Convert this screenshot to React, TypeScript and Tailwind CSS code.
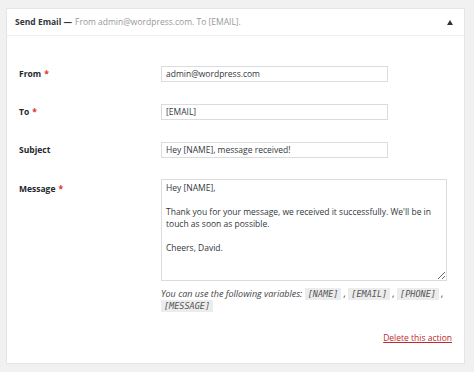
import React from "react";

const font = { fontFamily: '"Open Sans", "Noto Sans", sans-serif' };

function Label({ text, required }: { text: string; required?: boolean }) {
  return (
    <div className="w-[154px] shrink-0 pl-[12px] font-bold text-[#23282d] text-[8.5px]">
      {text}
      {required && <span className="text-[#dc3232] ml-[3px]">*</span>}
    </div>
  );
}

function Input({ value }: { value: string }) {
  return (
    <div className="w-[227px] h-[16px] border border-[#dcdcdc] flex items-center px-[4px] text-[8.5px] text-[#32373c] leading-none">
      {value}
    </div>
  );
}

function Chip({ children }: { children: React.ReactNode }) {
  return (
    <span
      className="bg-[#ececec] px-[3px] py-[1px] text-[#555] text-[8.5px]"
      style={{ fontFamily: '"DejaVu Sans Mono", monospace', fontStyle: "italic" }}
    >
      {children}
    </span>
  );
}

export default function App() {
  return (
    <div className="w-[474px] h-[372px] bg-[#f1f1f1] pt-[8px] pl-[6px]" style={font}>
      <div className="w-[459px] h-[356px] bg-white border border-[#e5e5e5] flex flex-col">
        <div className="h-[27px] border-b border-[#eeeeee] flex items-center justify-between pl-[8px] pr-[11px] text-[8.5px]">
          <div>
            <span className="font-bold text-[#32373c]">Send Email —</span>
            <span className="text-[#999] ml-[3px]">From admin@wordpress.com. To [EMAIL].</span>
          </div>
          <svg width="6" height="5" viewBox="0 0 6 5">
            <polygon points="3,0 6,5 0,5" fill="#333" />
          </svg>
        </div>
        <div className="flex flex-col pt-[30px]">
          <div className="flex items-center h-[16px]">
            <Label text="From" required />
            <Input value="admin@wordpress.com" />
          </div>
          <div className="flex items-center h-[16px] mt-[22px]">
            <Label text="To" required />
            <Input value="[EMAIL]" />
          </div>
          <div className="flex items-center h-[16px] mt-[22px]">
            <Label text="Subject" />
            <Input value="Hey [NAME], message received!" />
          </div>
          <div className="flex items-start mt-[21px]">
            <div className="pt-[4px]">
              <Label text="Message" required />
            </div>
            <div className="flex flex-col">
              <textarea
                readOnly
                className="w-[286px] h-[102px] border border-[#dcdcdc] px-[4px] py-[2px] text-[8.5px] leading-[12px] text-[#32373c] outline-none overflow-hidden"
                style={font}
                defaultValue={
                  "Hey [NAME],\n\nThank you for your message, we received it successfully. We'll be in touch as soon as possible.\n\nCheers, David."
                }
              />
              <div className="mt-[7px] w-[292px] italic text-[9px] leading-[12px] text-[#444]">
                You can use the following variables: <Chip>[NAME]</Chip> , <Chip>[EMAIL]</Chip> ,{" "}
                <Chip>[PHONE]</Chip> , <Chip>[MESSAGE]</Chip>
              </div>
            </div>
          </div>
          <div className="flex justify-end pr-[12px] mt-[20px]">
            <a className="text-[#c0282d] underline text-[8.5px]" href="#">
              Delete this action
            </a>
          </div>
        </div>
      </div>
    </div>
  );
}
